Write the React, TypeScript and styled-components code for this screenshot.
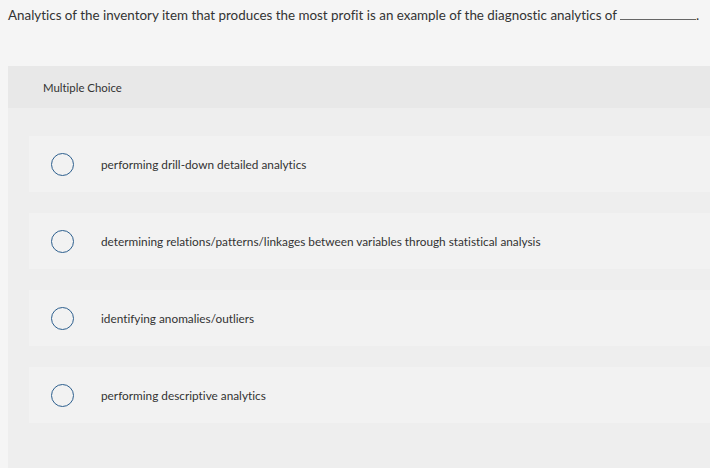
import React from "react";
import styled, { createGlobalStyle } from "styled-components";

const Global = createGlobalStyle`
  html, body { margin: 0; padding: 0; background: #f5f5f5; }
  body {
    font-family: Lato, "Open Sans", sans-serif;
    color: #333;
    overflow: hidden;
    font-variant-ligatures: none;
  }
`;

const Page = styled.div`
  width: 710px;
  height: 468px;
  background: #f5f5f5;
  padding: 6px 0 0 8px;
  box-sizing: border-box;
  display: flex;
  flex-direction: column;
`;

const Question = styled.p`
  margin: 0;
  font-size: 13.4px;
  line-height: 18px;
  color: #333;
  white-space: nowrap;
`;

const Blank = styled.span`
  display: inline-block;
  width: 76px;
  border-bottom: 1px solid #666;
  margin-left: 3px;
  vertical-align: baseline;
  height: 1px;
`;

const Panel = styled.section`
  margin-top: 42px;
  flex: 1;
  background: #eeeeee;
  display: flex;
  flex-direction: column;
`;

const Header = styled.header`
  height: 42px;
  background: #e8e8e8;
  display: flex;
  align-items: center;
  padding-left: 35px;
  font-size: 11.4px;
  color: #333;
`;

const Options = styled.ul`
  list-style: none;
  margin: 0;
  padding: 28px 0 0 21px;
  display: flex;
  flex-direction: column;
  gap: 21px;
`;

const Option = styled.li`
  height: 56px;
  background: #f2f2f2;
  display: flex;
  align-items: center;
  padding-left: 22px;
  gap: 27px;
`;

const Radio = styled.span`
  width: 23px;
  height: 23px;
  border: 1px solid #2d5f8e;
  border-radius: 50%;
  box-sizing: border-box;
  flex: none;
  background: transparent;
`;

const Label = styled.span`
  font-size: 11.8px;
  color: #333;
`;

const choices = [
  "performing drill-down detailed analytics",
  "determining relations/patterns/linkages between variables through statistical analysis",
  "identifying anomalies/outliers",
  "performing descriptive analytics",
];

export default function App() {
  return (
    <>
      <Global />
      <Page>
        <Question>
          Analytics of the inventory item that produces the most profit is an example of the diagnostic analytics of
          <Blank />.
        </Question>
        <Panel>
          <Header>Multiple Choice</Header>
          <Options>
            {choices.map((c) => (
              <Option key={c}>
                <Radio />
                <Label>{c}</Label>
              </Option>
            ))}
          </Options>
        </Panel>
      </Page>
    </>
  );
}
